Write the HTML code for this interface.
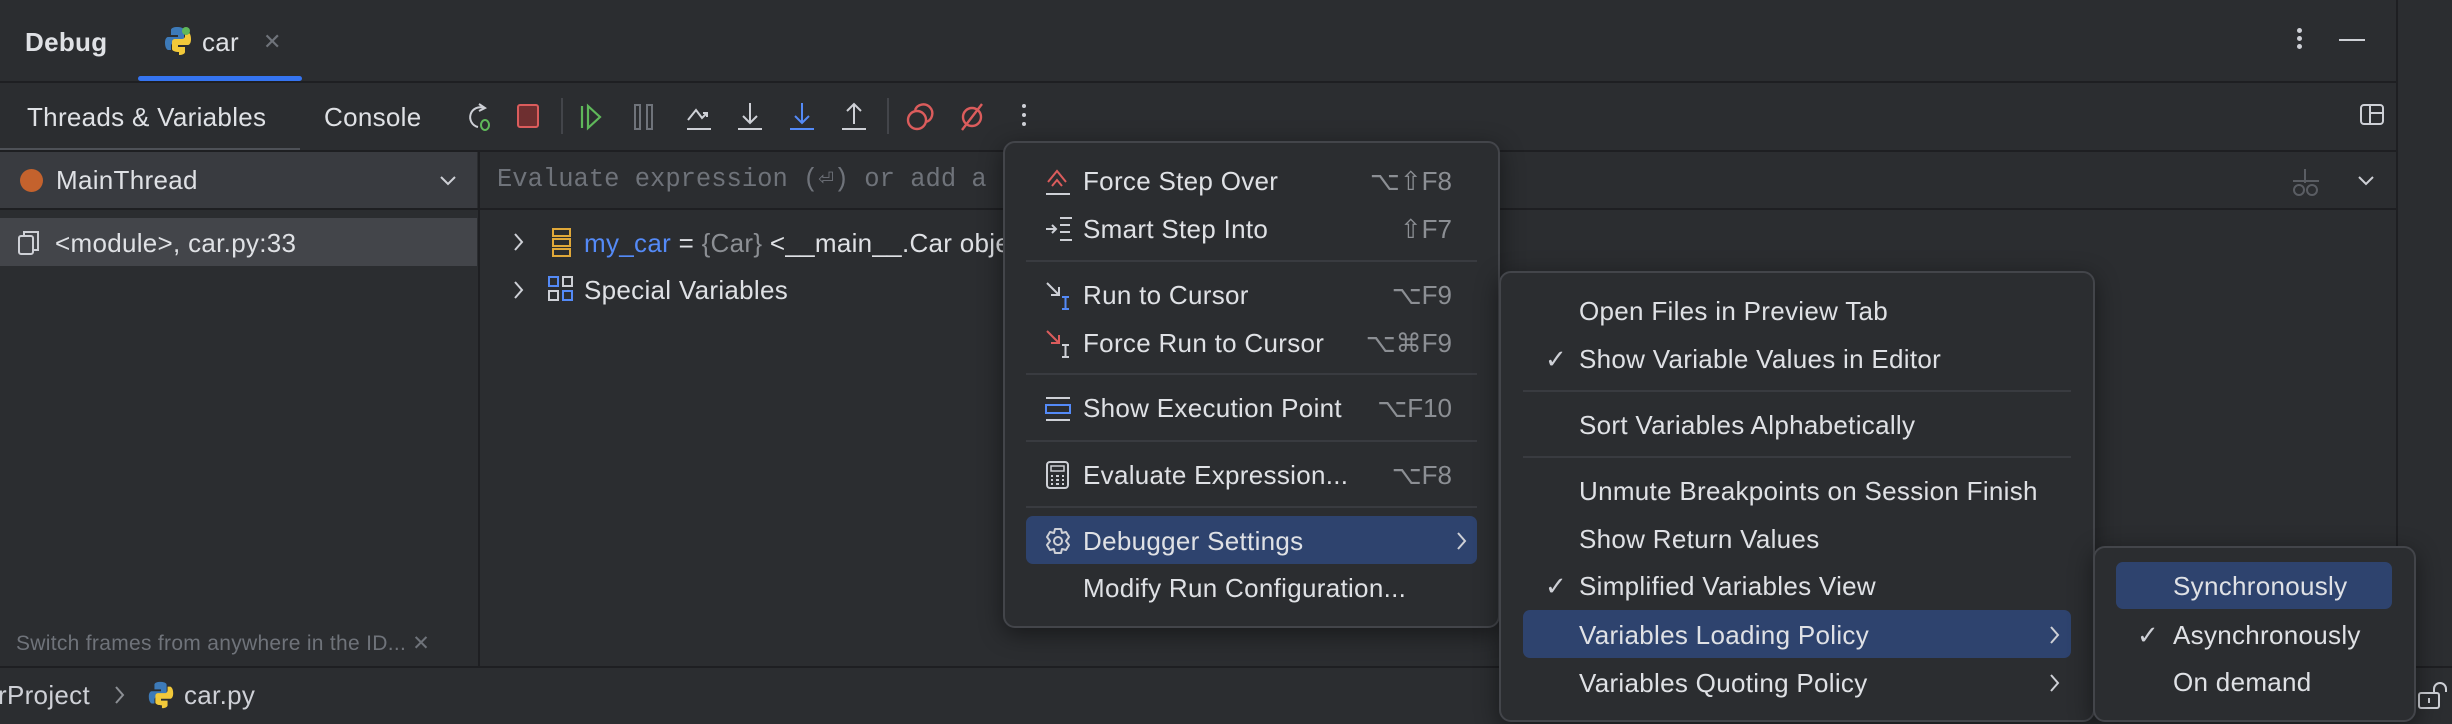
<!DOCTYPE html>
<html><head><meta charset="utf-8"><style>
*{margin:0;padding:0;box-sizing:border-box}
body{width:2452px;height:724px;background:#2b2d30;position:relative;overflow:hidden;font-family:"Liberation Sans",sans-serif;color:#dfe1e5}
.a{position:absolute}
.t{position:absolute;white-space:nowrap;font-size:26px;line-height:30px;letter-spacing:0.3px}
.hl{position:absolute;background:#1e1f22}
.pop{position:absolute;background:#2b2d30;border:2px solid #43454a;border-radius:12px;box-shadow:0 6px 24px rgba(0,0,0,.45)}
.sel{position:absolute;background:#2e436e;border-radius:7px}
.sep{position:absolute;height:2px;background:#393b40}
.sc{position:absolute;white-space:nowrap;font-size:26px;line-height:30px;color:#8c8f94;text-align:right}
svg{position:absolute;overflow:visible}
</style></head><body>

<!-- top tab bar -->
<div class="t" style="left:25px;top:27px;font-weight:bold">Debug</div>
<svg style="left:164px;top:25px" width="28" height="32" viewBox="0 0 28 32"><path d="M13 2c-6 0-6 3-6 3v5h7v2H4S1 12 1 18s3 7 3 7h3v-4s0-3 3-3h7s3 0 3-3V5s0-3-7-3z" fill="#3d7ab8"/><path d="M15 30c6 0 6-3 6-3v-5h-7v-2h10s3 0 3-6-3-7-3-7h-3v4s0 3-3 3h-7s-3 0-3 3v7s0 3 7 3z" fill="#f2c93a"/><circle cx="22" cy="6" r="4" fill="#5fb85a"/></svg>
<div class="t" style="left:202px;top:27px">car</div>
<div class="t" style="left:263px;top:27px;color:#6f737a;font-size:22px">✕</div>
<div class="a" style="left:138px;top:76px;width:164px;height:5px;background:#3574f0;border-radius:3px"></div>
<div class="a" style="left:2297px;top:28px;width:5px;height:5px;border-radius:50%;background:#ced0d6;box-shadow:0 8px 0 #ced0d6,0 16px 0 #ced0d6"></div>
<div class="a" style="left:2339px;top:39px;width:26px;height:2px;background:#ced0d6"></div>
<div class="hl" style="left:0;top:81px;width:2396px;height:2px"></div>

<!-- toolbar -->
<div class="t" style="left:27px;top:102px">Threads &amp; Variables</div>
<div class="t" style="left:324px;top:102px">Console</div>
<div class="a" style="left:0;top:148px;width:300px;height:4px;background:#4e5157"></div>
<svg style="left:464px;top:102px" width="28" height="30"><path d="M20 6A10 10 0 1 0 14 25" stroke="#ced0d6" stroke-width="2" fill="none"/><path d="M15 2l6 4-6 3" stroke="#ced0d6" stroke-width="2" fill="none"/><ellipse cx="21" cy="23" rx="4" ry="5" stroke="#5fb85a" stroke-width="2" fill="none"/></svg>
<div class="a" style="left:517px;top:104px;width:22px;height:24px;background:#6e2f30;border:2px solid #db5c5c;border-radius:3px"></div>
<div class="a" style="left:561px;top:98px;width:2px;height:36px;background:#43454a"></div>
<svg style="left:580px;top:104px" width="30" height="26"><path d="M2 2v22M8 2l12 11-12 11z" stroke="#5fb85a" stroke-width="2.2" fill="none"/></svg>
<svg style="left:634px;top:104px" width="22" height="26"><rect x="1" y="1" width="5" height="24" stroke="#6f737a" stroke-width="2" fill="none"/><rect x="13" y="1" width="5" height="24" stroke="#6f737a" stroke-width="2" fill="none"/></svg>
<svg style="left:686px;top:102px" width="26" height="30"><path d="M2 18l8-10 6 8 4-4M17 11h4v4M1 27h24" stroke="#ced0d6" stroke-width="2" fill="none"/></svg>
<svg style="left:737px;top:102px" width="26" height="30"><path d="M13 1v20M6 14l7 7 7-7M1 27h24" stroke="#ced0d6" stroke-width="2" fill="none"/></svg>
<svg style="left:789px;top:102px" width="26" height="30"><path d="M13 1v20M6 14l7 7 7-7M1 27h24" stroke="#548af7" stroke-width="2" fill="none"/></svg>
<svg style="left:841px;top:102px" width="26" height="30"><path d="M13 22V2M6 9l7-7 7 7M1 27h24" stroke="#ced0d6" stroke-width="2" fill="none"/></svg>
<div class="a" style="left:887px;top:98px;width:2px;height:36px;background:#43454a"></div>
<svg style="left:906px;top:102px" width="30" height="30"><circle cx="11" cy="18" r="9" stroke="#db5c5c" stroke-width="2.4" fill="none"/><path d="M9 8a9 9 0 1 1 11 12" stroke="#db5c5c" stroke-width="2.4" fill="none"/></svg>
<svg style="left:959px;top:102px" width="30" height="30"><circle cx="13" cy="15" r="9" stroke="#db5c5c" stroke-width="2.4" fill="none"/><path d="M3 28L23 2" stroke="#db5c5c" stroke-width="2.4"/></svg>
<div class="a" style="left:1022px;top:104px;width:4px;height:4px;border-radius:50%;background:#ced0d6;box-shadow:0 9px 0 #ced0d6,0 18px 0 #ced0d6"></div>
<svg style="left:2360px;top:104px" width="24" height="22"><rect x="1" y="1" width="22" height="19" rx="3" stroke="#ced0d6" stroke-width="2" fill="none"/><path d="M10 1v19M10 9h13" stroke="#ced0d6" stroke-width="2"/></svg>
<div class="hl" style="left:0;top:150px;width:2396px;height:2px"></div>

<!-- left panel -->
<div class="a" style="left:0;top:152px;width:477px;height:56px;background:#393b40"></div>
<div class="a" style="left:20px;top:169px;width:23px;height:23px;border-radius:50%;background:#c4622d"></div>
<div class="t" style="left:56px;top:165px">MainThread</div>
<svg style="left:440px;top:176px" width="16" height="10"><path d="M1 1l7 7 7-7" stroke="#ced0d6" stroke-width="2" fill="none"/></svg>
<div class="hl" style="left:0;top:208px;width:2396px;height:2px"></div>
<div class="a" style="left:0;top:218px;width:477px;height:48px;background:#43454a"></div>
<svg style="left:18px;top:230px" width="22" height="26"><rect x="1" y="6" width="14" height="18" rx="2" stroke="#ced0d6" stroke-width="2" fill="none"/><path d="M6 6V2h14v18h-5" stroke="#ced0d6" stroke-width="2" fill="none"/></svg>
<div class="t" style="left:55px;top:228px">&lt;module&gt;, car.py:33</div>
<div class="t" style="left:16px;top:632px;font-size:21px;line-height:24px;color:#6f737a">Switch frames from anywhere in the ID... <span style="font-size:21px">✕</span></div>
<div class="a" style="left:478px;top:152px;width:2px;height:515px;background:#1e1f22"></div>
<div class="a" style="left:2396px;top:0;width:2px;height:667px;background:#1e1f22"></div>

<!-- evaluate row -->
<div class="t" style="left:497px;top:165px;font-family:'Liberation Mono',monospace;font-size:25.5px;letter-spacing:0;color:#6f737a">Evaluate expression (⏎) or add a</div>
<svg style="left:2291px;top:168px" width="30" height="30"><path d="M14 1v14M2 13h26" stroke="#5a5d63" stroke-width="2"/><circle cx="8" cy="22" r="5" stroke="#5a5d63" stroke-width="2" fill="none"/><circle cx="21" cy="22" r="5" stroke="#5a5d63" stroke-width="2" fill="none"/></svg>
<svg style="left:2358px;top:176px" width="16" height="10"><path d="M1 1l7 7 7-7" stroke="#ced0d6" stroke-width="2" fill="none"/></svg>

<!-- tree -->
<svg style="left:514px;top:233px" width="10" height="18"><path d="M1 1l7 8-7 8" stroke="#ced0d6" stroke-width="2" fill="none"/></svg>
<svg style="left:552px;top:228px" width="20" height="30"><rect x="1" y="1" width="17" height="7" stroke="#e0a839" stroke-width="2" fill="none"/><rect x="1" y="11" width="17" height="7" stroke="#e0a839" stroke-width="2" fill="none"/><rect x="1" y="21" width="17" height="7" stroke="#e0a839" stroke-width="2" fill="none"/></svg>
<div class="t" style="left:584px;top:228px"><span style="color:#548af7">my_car</span> = <span style="color:#8c8f94">{Car}</span> &lt;__main__.Car obje</div>
<svg style="left:514px;top:281px" width="10" height="18"><path d="M1 1l7 8-7 8" stroke="#ced0d6" stroke-width="2" fill="none"/></svg>
<svg style="left:548px;top:276px" width="26" height="26"><rect x="1" y="1" width="9" height="9" stroke="#548af7" stroke-width="2" fill="none"/><rect x="15" y="1" width="9" height="9" stroke="#ced0d6" stroke-width="2" fill="none"/><rect x="1" y="15" width="9" height="9" stroke="#ced0d6" stroke-width="2" fill="none"/><rect x="15" y="15" width="9" height="9" stroke="#548af7" stroke-width="2" fill="none"/></svg>
<div class="t" style="left:584px;top:275px">Special Variables</div>

<!-- status bar -->
<div class="hl" style="left:0;top:666px;width:2452px;height:2px"></div>
<div class="t" style="left:-2px;top:680px;color:#ced0d6">rProject</div>
<svg style="left:115px;top:686px" width="10" height="18"><path d="M1 1l7 8-7 8" stroke="#8c8f94" stroke-width="2" fill="none"/></svg>
<svg style="left:147px;top:680px" width="28" height="30" viewBox="0 0 28 32"><path d="M13 2c-6 0-6 3-6 3v5h7v2H4S1 12 1 18s3 7 3 7h3v-4s0-3 3-3h7s3 0 3-3V5s0-3-7-3z" fill="#3d7ab8"/><path d="M15 30c6 0 6-3 6-3v-5h-7v-2h10s3 0 3-6-3-7-3-7h-3v4s0 3-3 3h-7s-3 0-3 3v7s0 3 7 3z" fill="#f2c93a"/></svg>
<div class="t" style="left:184px;top:680px;color:#ced0d6">car.py</div>
<svg style="left:2418px;top:684px" width="30" height="26"><rect x="1" y="9" width="20" height="15" rx="2" stroke="#ced0d6" stroke-width="2" fill="none"/><path d="M16 9V5a6 6 0 0 1 12 0v3M11 14v5" stroke="#ced0d6" stroke-width="2" fill="none"/></svg>

<!-- popup 1 -->
<div class="pop" style="left:1003px;top:141px;width:497px;height:487px"></div>
<svg style="left:1045px;top:168px" width="26" height="28"><path d="M3 14l9-11 9 11M7 18l5-6 5 6" stroke="#db5c5c" stroke-width="2" fill="none"/><path d="M1 26h24" stroke="#ced0d6" stroke-width="2"/></svg>
<div class="t" style="left:1083px;top:166px">Force Step Over</div><div class="sc" style="left:1300px;width:152px;top:166px">⌥⇧F8</div>
<svg style="left:1045px;top:216px" width="28" height="26"><path d="M1 13h10M7 9l4 4-4 4" stroke="#ced0d6" stroke-width="2" fill="none"/><path d="M15 2h12M15 9h10M15 16h10M15 24h12" stroke="#ced0d6" stroke-width="2"/></svg>
<div class="t" style="left:1083px;top:214px">Smart Step Into</div><div class="sc" style="left:1300px;width:152px;top:214px">⇧F7</div>
<div class="sep" style="left:1026px;top:260px;width:451px"></div>
<svg style="left:1045px;top:281px" width="30" height="30"><path d="M2 2l12 12M6 14h8V6" stroke="#ced0d6" stroke-width="2" fill="none"/><path d="M17 16h7M20.5 16v12M17 28h7" stroke="#548af7" stroke-width="2"/></svg>
<div class="t" style="left:1083px;top:280px">Run to Cursor</div><div class="sc" style="left:1300px;width:152px;top:280px">⌥F9</div>
<svg style="left:1045px;top:329px" width="30" height="30"><path d="M2 2l12 12M6 14h8V6" stroke="#db5c5c" stroke-width="2" fill="none"/><path d="M17 16h7M20.5 16v12M17 28h7" stroke="#ced0d6" stroke-width="2"/></svg>
<div class="t" style="left:1083px;top:328px">Force Run to Cursor</div><div class="sc" style="left:1300px;width:152px;top:328px">⌥⌘F9</div>
<div class="sep" style="left:1026px;top:373px;width:451px"></div>
<svg style="left:1045px;top:396px" width="26" height="26"><path d="M1 2h24M1 24h24" stroke="#ced0d6" stroke-width="2"/><rect x="1" y="9" width="24" height="8" stroke="#548af7" stroke-width="2" fill="none"/></svg>
<div class="t" style="left:1083px;top:393px">Show Execution Point</div><div class="sc" style="left:1300px;width:152px;top:393px">⌥F10</div>
<div class="sep" style="left:1026px;top:440px;width:451px"></div>
<svg style="left:1046px;top:461px" width="24" height="28"><rect x="1" y="1" width="21" height="26" rx="3" stroke="#ced0d6" stroke-width="2" fill="none"/><rect x="5" y="5" width="13" height="5" stroke="#ced0d6" stroke-width="1.5" fill="none"/><path d="M5 15h2M10 15h3M16 15h2M5 19h2M10 19h3M16 19h2M5 23h2M10 23h3M16 23h2" stroke="#ced0d6" stroke-width="2"/></svg>
<div class="t" style="left:1083px;top:460px">Evaluate Expression...</div><div class="sc" style="left:1300px;width:152px;top:460px">⌥F8</div>
<div class="sep" style="left:1026px;top:506px;width:451px"></div>
<div class="sel" style="left:1026px;top:516px;width:451px;height:48px"></div>
<svg style="left:1045px;top:527px" width="26" height="28" viewBox="0 0 26 28"><path d="M10 2h6l1 4 4-1 3 5-3 4 3 4-3 5-4-1-1 4h-6l-1-4-4 1-3-5 3-4-3-4 3-5 4 1z" stroke="#ced0d6" stroke-width="2" fill="none" stroke-linejoin="round"/><circle cx="13" cy="14" r="4" stroke="#ced0d6" stroke-width="2" fill="none"/></svg>
<div class="t" style="left:1083px;top:526px">Debugger Settings</div>
<svg style="left:1457px;top:532px" width="10" height="18"><path d="M1 1l7 8-7 8" stroke="#ced0d6" stroke-width="2" fill="none"/></svg>
<div class="t" style="left:1083px;top:573px">Modify Run Configuration...</div>

<!-- popup 2 -->
<div class="pop" style="left:1499px;top:271px;width:596px;height:451px"></div>
<div class="t" style="left:1579px;top:296px">Open Files in Preview Tab</div>
<div class="t" style="left:1545px;top:344px;color:#ced0d6">✓</div>
<div class="t" style="left:1579px;top:344px">Show Variable Values in Editor</div>
<div class="sep" style="left:1523px;top:390px;width:548px"></div>
<div class="t" style="left:1579px;top:410px">Sort Variables Alphabetically</div>
<div class="sep" style="left:1523px;top:456px;width:548px"></div>
<div class="t" style="left:1579px;top:476px">Unmute Breakpoints on Session Finish</div>
<div class="t" style="left:1579px;top:524px">Show Return Values</div>
<div class="t" style="left:1545px;top:571px;color:#ced0d6">✓</div>
<div class="t" style="left:1579px;top:571px">Simplified Variables View</div>
<div class="sel" style="left:1523px;top:610px;width:548px;height:48px"></div>
<div class="t" style="left:1579px;top:620px">Variables Loading Policy</div>
<svg style="left:2050px;top:626px" width="10" height="18"><path d="M1 1l7 8-7 8" stroke="#ced0d6" stroke-width="2" fill="none"/></svg>
<div class="t" style="left:1579px;top:668px">Variables Quoting Policy</div>
<svg style="left:2050px;top:674px" width="10" height="18"><path d="M1 1l7 8-7 8" stroke="#ced0d6" stroke-width="2" fill="none"/></svg>

<!-- popup 3 -->
<div class="pop" style="left:2093px;top:546px;width:323px;height:176px"></div>
<div class="sel" style="left:2116px;top:562px;width:276px;height:47px"></div>
<div class="t" style="left:2173px;top:571px">Synchronously</div>
<div class="t" style="left:2137px;top:620px;color:#ced0d6">✓</div>
<div class="t" style="left:2173px;top:620px">Asynchronously</div>
<div class="t" style="left:2173px;top:667px">On demand</div>
</body></html>
